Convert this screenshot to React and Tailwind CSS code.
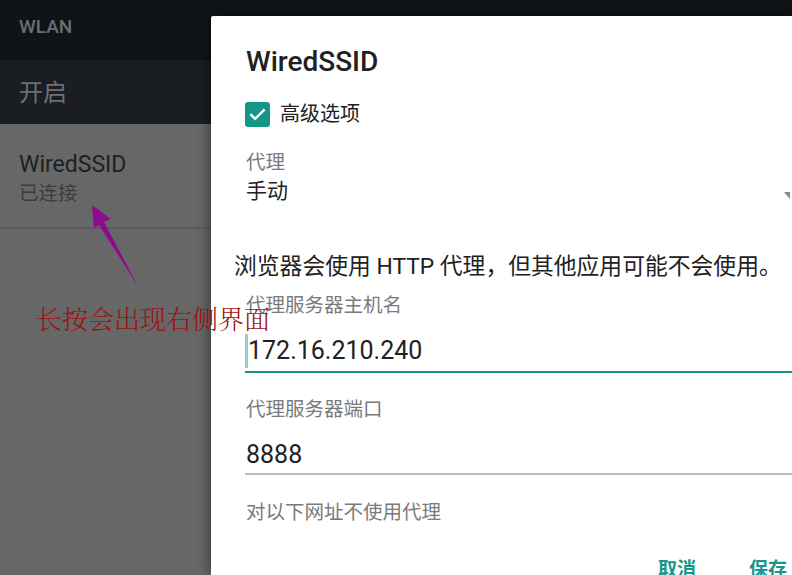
import React from 'react';

const Checkbox = () => (
  <div className="w-[25px] h-[25px] rounded-[3px] bg-[#149789] flex items-center justify-center">
    <svg width="19" height="19" viewBox="0 0 24 24" fill="none">
      <path d="M4 12.5l5 5L20 6.5" stroke="#ffffff" strokeWidth="3" strokeLinecap="square" />
    </svg>
  </div>
);

const Label = ({ children, className = '' }) => (
  <div className={`text-[19.5px] leading-[24px] text-[#7a7a7a] ${className}`}>{children}</div>
);

const App = () => {
  return (
    <div
      className="relative w-[792px] h-[575px] overflow-hidden bg-[#676767]"
      style={{ fontFamily: 'Roboto, "Noto Sans CJK SC", sans-serif' }}
    >
      {/* dimmed settings page behind the dialog */}
      <div className="h-[60px] bg-[#111417] flex items-center pl-[19px] pb-[5px]">
        <span className="text-[19px] font-medium text-[#6b6e71]">WLAN</span>
      </div>
      <div className="h-[64px] bg-[#1a1e22] flex items-center pl-[19px] pt-[2px]">
        <span className="text-[24px] text-[#6e7073]">开启</span>
      </div>
      <div className="h-[103px] pl-[19px] pt-[26px]">
        <div className="text-[23px] leading-[30px] text-[#1f1f1f]">WiredSSID</div>
        <div className="text-[19.5px] leading-[26px] text-[#3d3d3d] mt-[1px]">已连接</div>
      </div>
      <div className="h-[2px] bg-[#5c5c5c]" />

      {/* dialog */}
      <div className="absolute left-[211px] top-[16px] right-0 bottom-0 bg-white rounded-tl-[2px] shadow-[0_0_14px_rgba(0,0,0,0.55)] pl-[35px]">
        <div className="pt-[28px] text-[28px] leading-[36px] font-medium text-[#212121]">WiredSSID</div>

        <div className="mt-[20px] h-[28px] flex items-center gap-[10px] -ml-[1px]">
          <Checkbox />
          <span className="text-[20px] text-[#212121]">高级选项</span>
        </div>

        <Label className="mt-[23px]">代理</Label>
        <div className="mt-[3px] h-[28px] flex items-center justify-between">
          <span className="text-[21px] text-[#212121]">手动</span>
          <svg width="6" height="7" viewBox="0 0 6 7" className="mt-[6px] mr-[2px]">
            <path d="M0 0H6V7Z" fill="#8a8a8a" />
          </svg>
        </div>

        <div className="mt-[46px] -ml-[12px] text-[22.8px] leading-[30px] text-[#212121] whitespace-nowrap">
          浏览器会使用 HTTP 代理，但其他应用可能不会使用。
        </div>

        <Label className="mt-[12px]">代理服务器主机名</Label>
        <div className="mt-[17px] h-[32px] flex items-center">
          <div className="w-[3px] h-[34px] bg-[#8fd2ca] -ml-[1px]" />
          <span className="text-[25px] text-[#212121]">172.16.210.240</span>
        </div>
        <div className="mt-[4px] h-[2px] bg-[#149789] -ml-[1px]" />

        <Label className="mt-[25px]">代理服务器端口</Label>
        <div className="mt-[17px] h-[32px] flex items-center">
          <span className="text-[25px] text-[#212121]">8888</span>
        </div>
        <div className="mt-[2px] h-[2px] bg-[#bdbdbd] -ml-[1px]" />

        <Label className="mt-[26px]">对以下网址不使用代理</Label>

        <div className="mt-[31px] h-[28px] flex justify-end items-center gap-[53px] pr-[5px]">
          <span className="text-[19px] font-bold text-[#17968a]">取消</span>
          <span className="text-[19px] font-bold text-[#17968a]">保存</span>
        </div>
      </div>

      {/* annotation */}
      <svg className="absolute left-0 top-0" width="160" height="300" viewBox="0 0 160 300">
        <path d="M92 205 L111 219 L104 222 L138 286 L99 225 L94 228 Z" fill="#8b0b91" />
      </svg>
      <div
        className="absolute left-[36px] top-[303px] text-[26px] leading-[30px] text-[#a0100f] font-light whitespace-nowrap"
        style={{ fontFamily: '"Noto Serif CJK SC", "Liberation Serif", "Noto Sans CJK SC", serif' }}
      >
        长按会出现右侧界面
      </div>
    </div>
  );
};

export default App;
